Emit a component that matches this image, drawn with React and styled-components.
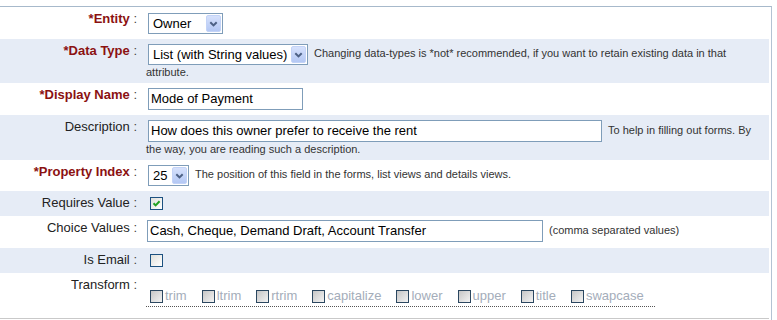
import React from "react";
import styled, { createGlobalStyle } from "styled-components";

const GlobalStyle = createGlobalStyle`
  html, body { margin: 0; padding: 0; background: #fff; }
  body { font-family: "Liberation Sans", Arial, sans-serif; }
`;

const Panel = styled.div`
  margin-top: 6px;
  width: 769px;
  padding-right: 2px;
  padding-bottom: 1px;
  border-top: 1px solid #a7b9cb;
  border-right: 1px solid #b3c3d3;
`;

const Form = styled.div`
  border-bottom: 1px solid #c9c9c9;
`;

const Row = styled.div`
  display: grid;
  grid-template-columns: 140px 1fr;
  box-sizing: border-box;
  min-height: ${(p) => p.$h}px;
  background: ${(p) => (p.$alt ? "#e6ecf6" : "#fff")};
`;

const Label = styled.div`
  text-align: right;
  padding: 4px 3px 0 0;
  font-size: 13px;
  line-height: 16px;
  color: #222;
  white-space: nowrap;
`;

const Req = styled.span`
  color: #8b1111;
  font-weight: bold;
`;

const Colon = styled.span`
  color: #444;
  font-weight: normal;
`;

const Value = styled.div`
  padding: ${(p) => p.$pt ?? 5}px 10px 0 6px;
  font-size: 11px;
  line-height: 14px;
  color: #333;
`;

const SelectBox = styled.span`
  display: inline-flex;
  align-items: center;
  justify-content: space-between;
  box-sizing: border-box;
  width: ${(p) => p.$w}px;
  height: 21px;
  margin: 0 6px 0 2px;
  padding: 0 1px 0 4px;
  border: 1px solid #7f9db9;
  background: #fff;
  font-size: 13px;
  color: #000;
  vertical-align: middle;
  white-space: nowrap;
`;

const Arrow = styled.span`
  display: flex;
  align-items: center;
  justify-content: center;
  box-sizing: border-box;
  width: 15px;
  height: 17px;
  border: 1px solid #c3d3f7;
  border-radius: 2px;
  background: linear-gradient(#d6e1fc, #b4c8f4);
`;

const TextBox = styled.span`
  display: inline-flex;
  align-items: center;
  box-sizing: border-box;
  width: ${(p) => p.$w}px;
  height: 22px;
  margin: 0 6px 0 ${(p) => p.$ml ?? 2}px;
  padding: 0 2px;
  border: 1px solid #7f9db9;
  background: #fff;
  font-size: 13px;
  color: #000;
  vertical-align: middle;
  white-space: nowrap;
  overflow: hidden;
`;

const Box = styled.span`
  display: inline-flex;
  align-items: center;
  justify-content: center;
  box-sizing: border-box;
  width: 13px;
  height: 13px;
  flex: none;
  border: 1px solid ${(p) => (p.$disabled ? "#2b4760" : "#1c5180")};
  background: ${(p) =>
    p.$disabled
      ? "linear-gradient(135deg, #c6c6c6, #f3f3f3)"
      : "linear-gradient(135deg, #e0e0db, #fff)"};
`;

const CheckCell = styled.div`
  padding: 6px 0 0 10px;
  display: flex;
  align-items: flex-start;
`;

const ChoiceList = styled.div`
  display: inline-flex;
  border-bottom: 1px dotted #555;
`;

const Choice = styled.span`
  display: inline-flex;
  align-items: center;
  gap: 2px;
  padding: 1px 11px 2px 4px;
  font-size: 13px;
  line-height: 16px;
  color: #a4adba;
`;

const Chevron = () => (
  <svg width="9" height="6" viewBox="0 0 9 6">
    <path d="M1.3 1.2 L4.5 4.4 L7.7 1.2" fill="none" stroke="#4d6185" strokeWidth="2" />
  </svg>
);

const Tick = () => (
  <svg width="9" height="9" viewBox="0 0 9 9">
    <path d="M1.5 4.3 L3.6 6.4 L7.6 2.2" fill="none" stroke="#21a121" strokeWidth="2" />
  </svg>
);

function Select({ w, children }) {
  return (
    <SelectBox $w={w}>
      {children}
      <Arrow>
        <Chevron />
      </Arrow>
    </SelectBox>
  );
}

function FieldLabel({ required, children }) {
  return (
    <Label>
      {required ? <Req>*{children}</Req> : children}
      <Colon> :</Colon>
    </Label>
  );
}

const transforms = ["trim", "ltrim", "rtrim", "capitalize", "lower", "upper", "title", "swapcase"];

export default function App() {
  return (
    <>
      <GlobalStyle />
      <Panel>
        <Form>
          <Row $h={32}>
            <FieldLabel required>Entity</FieldLabel>
            <Value $pt={6}>
              <Select w={75}>Owner</Select>
            </Value>
          </Row>
          <Row $alt $h={44}>
            <FieldLabel required>Data Type</FieldLabel>
            <Value>
              <Select w={160}>List (with String values)</Select>
              Changing data-types is *not* recommended, if you want to retain existing data in that attribute.
            </Value>
          </Row>
          <Row $h={32}>
            <FieldLabel required>Display Name</FieldLabel>
            <Value>
              <TextBox $w={155}>Mode of Payment</TextBox>
            </Value>
          </Row>
          <Row $alt $h={45}>
            <FieldLabel>Description</FieldLabel>
            <Value>
              <TextBox $w={454}>How does this owner prefer to receive the rent</TextBox>
              To help in filling out forms. By the way, you are reading such a description.
            </Value>
          </Row>
          <Row $h={31}>
            <FieldLabel required>Property Index</FieldLabel>
            <Value>
              <Select w={41}>25</Select>
              The position of this field in the forms, list views and details views.
            </Value>
          </Row>
          <Row $alt $h={25}>
            <FieldLabel>Requires Value</FieldLabel>
            <CheckCell>
              <Box>
                <Tick />
              </Box>
            </CheckCell>
          </Row>
          <Row $h={32}>
            <FieldLabel>Choice Values</FieldLabel>
            <Value $pt={4}>
              <TextBox $w={396} $ml={1}>
                Cash, Cheque, Demand Draft, Account Transfer
              </TextBox>
              (comma separated values)
            </Value>
          </Row>
          <Row $alt $h={25}>
            <FieldLabel>Is Email</FieldLabel>
            <CheckCell>
              <Box />
            </CheckCell>
          </Row>
          <Row $h={45}>
            <FieldLabel>Transform</FieldLabel>
            <Value $pt={14}>
              <ChoiceList>
                {transforms.map((t) => (
                  <Choice key={t}>
                    <Box $disabled />
                    {t}
                  </Choice>
                ))}
              </ChoiceList>
            </Value>
          </Row>
        </Form>
      </Panel>
    </>
  );
}
